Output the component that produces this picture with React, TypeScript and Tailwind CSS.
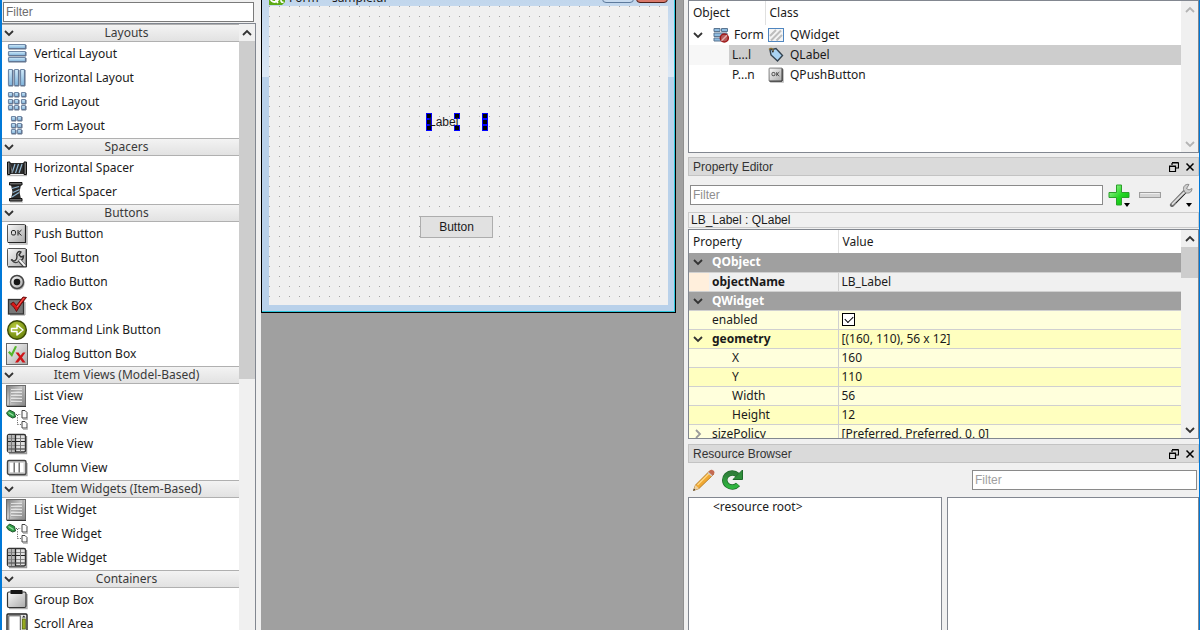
import type { ReactNode } from "react";
import { clsx } from "clsx";

function Chevron({ dir = "down", className = "text-[#333333]" }: { dir?: "down" | "up" | "right"; className?: string }) {
  const paths = { down: "M1 3l4 4 4-4", up: "M1 7l4-4 4 4", right: "M3 1l4 4-4 4" };
  return (
    <svg className={clsx("h-2.5 w-2.5 shrink-0", className)} viewBox="0 0 10 10" fill="none" stroke="currentColor" strokeWidth="1.8">
      <path d={paths[dir]} />
    </svg>
  );
}

/* Shared gradients for the widget icons */
function IconDefs() {
  return (
    <svg className="absolute h-0 w-0" aria-hidden="true">
      <defs>
        <linearGradient id="bar" x1="0" y1="0" x2="0" y2="1">
          <stop offset="0" stopColor="#d3ecfb" />
          <stop offset="1" stopColor="#7fb4dc" />
        </linearGradient>
        <linearGradient id="grey" x1="0" y1="0" x2="1" y2="1">
          <stop offset="0" stopColor="#fafafa" />
          <stop offset="1" stopColor="#a9a9a9" />
        </linearGradient>
        <linearGradient id="list" x1="0" y1="0" x2="1" y2="1">
          <stop offset="0" stopColor="#7d7d7d" />
          <stop offset="0.45" stopColor="#c9c9c9" />
          <stop offset="1" stopColor="#858585" />
        </linearGradient>
        <linearGradient id="plus" x1="0" y1="0" x2="1" y2="1">
          <stop offset="0" stopColor="#b5f7a8" />
          <stop offset="0.55" stopColor="#22d822" />
          <stop offset="1" stopColor="#09b109" />
        </linearGradient>
        <linearGradient id="refresh" x1="0" y1="0" x2="0" y2="1">
          <stop offset="0" stopColor="#2f7d3a" />
          <stop offset="1" stopColor="#2fb63f" />
        </linearGradient>
        <radialGradient id="olive" cx="0.4" cy="0.3" r="0.8">
          <stop offset="0" stopColor="#b4c83a" />
          <stop offset="1" stopColor="#647d06" />
        </radialGradient>
      </defs>
    </svg>
  );
}

function Cells({ xs, ys, w, h }: { xs: number[]; ys: number[]; w: number; h: number }) {
  return (
    <>
      {xs.flatMap((x) =>
        ys.map((y) => (
          <g key={`${x}-${y}`}>
            <rect x={x + 0.5} y={y + 0.5} width={w} height={h} rx="0.8" fill="url(#bar)" stroke="#6f87a6" strokeWidth="1.2" />
            <path d={`M${x + 0.5} ${y + h + 1}h${w + 0.5}V${y + 1}`} fill="none" stroke="#53657f" strokeWidth="0.9" />
          </g>
        ))
      )}
    </>
  );
}

const icons: Record<string, ReactNode> = {
  vbox: <Cells xs={[2]} ys={[1, 8, 14]} w={17} h={4} />,
  hbox: <Cells xs={[2, 8, 14]} ys={[2]} w={4} h={16} />,
  grid: <Cells xs={[2, 8, 15]} ys={[1, 8, 14]} w={4} h={4} />,
  form: <Cells xs={[5, 11]} ys={[1, 8, 14]} w={4} h={4} />,
  hspacer: (
    <>
      <path d="M1 18.5h20" stroke="#b5b5b5" strokeWidth="1.4" />
      <rect x="4" y="6" width="14" height="11" fill="#2b2b2b" />
      <path d="M6 16l3-9M9.5 16l3-9M13 16l3-9" stroke="#8fb6d2" strokeWidth="1.2" />
      <path d="M4 7l2.500 9" stroke="#777777" />
      <path d="M1.500 5h2.500v12.500H1.500zM18 5h2.500v12.500H18z" fill="#777777" stroke="#111111" />
    </>
  ),
  vspacer: (
    <>
      <path d="M4 21h13" stroke="#b5b5b5" />
      <path d="M5 4h10l-1.500 7 1.500 7H5l1.500-7z" fill="#2b2b2b" />
      <path d="M6 7.500l7-2M7 11.500l6.500-3M6 16l7-4.500" stroke="#8fb6d2" strokeWidth="1.200" />
      <path d="M3.500 1.500h12.500V4H3.500zM3.500 17.500h12.500V20H3.500z" fill="#666666" stroke="#111111" />
    </>
  ),
  push: (
    <>
      <path d="M3 21h18V3" fill="none" stroke="#b8b8b8" strokeWidth="1.5" />
      <rect x="1.5" y="1.5" width="18" height="18" rx="1" fill="url(#grey)" stroke="#555555" />
      <path d="M2 19.5h17.5V2" fill="none" stroke="#222222" strokeWidth="1.2" />
      <rect x="5.5" y="7.5" width="4" height="4.5" rx="1.4" fill="none" stroke="#222222" />
      <path d="M12 7v5.5M15.5 7l-3 2.8 3 2.7" fill="none" stroke="#222222" />
    </>
  ),
  tool: (
    <>
      <rect x="1.5" y="1.5" width="18.5" height="18" rx="1" fill="url(#grey)" stroke="#555555" />
      <path d="M5 12.5c3 3 6 1 6-3-1-4 2-6 4-4.500l-2 3 2 2 2.500-1c0 3-2 4.500-4 5" fill="none" stroke="#333333" strokeWidth="1.4" />
      <path d="M6 12c0 3 3 4.500 6 3" fill="none" stroke="#444444" strokeWidth="1.2" />
      <path d="M13 13l5.500 6" stroke="#444444" strokeWidth="3.600" />
      <path d="M13.500 13l5.500 6" stroke="#f3f3f3" strokeWidth="2" />
      <path d="M2 20h18.500V2" fill="none" stroke="#333333" />
    </>
  ),
  radio: (
    <>
      <circle cx="11.5" cy="12" r="7.3" fill="#bbbbbb" />
      <circle cx="11" cy="11" r="6.5" fill="url(#grey)" stroke="#444444" strokeWidth="1.5" />
      <circle cx="11" cy="11" r="3.3" fill="#151515" />
    </>
  ),
  check: (
    <>
      <path d="M4 20h15V7" fill="none" stroke="#999999" />
      <rect x="2.5" y="4.5" width="15" height="14.5" fill="#777777" stroke="#333333" strokeWidth="1.3" />
      <path d="M4.5 9l3-2 3 3.5L17 2l3.5.5C16.5 7 13 12 10.5 16.5 9 13.5 7 11 4.5 9z" fill="#d81818" stroke="#5b0808" strokeWidth="0.9" />
      <path d="M11 12l7-9" stroke="#ff7a70" strokeWidth="0.8" />
    </>
  ),
  command: (
    <>
      <circle cx="11" cy="11" r="9.3" fill="url(#olive)" stroke="#3b4a06" strokeWidth="1.4" />
      <path d="M5.5 9.5H11V6l6 5-6 5v-3.5H5.5z" fill="none" stroke="#ffffff" strokeWidth="1.5" strokeLinejoin="round" />
    </>
  ),
  dialog: (
    <>
      <rect x="0.5" y="0.5" width="21" height="21" fill="url(#grey)" stroke="#666666" />
      <path d="M2 9.5L3.5 8l2 2L9 3l2 .5L6 14z" fill="#55b62b" />
      <path d="M9.5 9.5h3l2 3 2.5-3h2.5l-3.500 5 3.500 5h-3l-2-3-2.500 3H9l4-5.500z" fill="#cf1418" />
    </>
  ),
  list: (
    <>
      <rect x="0.5" y="0.5" width="19" height="20.5" fill="url(#list)" stroke="#6b6b6b" />
      <path d="M1 21.5h19" stroke="#333333" />
      <path d="M3.5 1v20M17 1v20" stroke="#8d8d8d" strokeWidth="0.7" />
      <path d="M5 4.5h11M5 7.5h11M5 10.5h11M5 13.5h11M5 16.5h11" stroke="#e6e6e6" strokeWidth="0.9" />
      <path d="M5 5.5h11M5 8.5h11M5 11.5h11M5 14.5h11M5 17.5h11" stroke="#9b9b9b" strokeWidth="0.6" />
    </>
  ),
  tree: (
    <>
      <path d="M.5 4l3-3 5 2.5 1 4.500-3 1L2 6.500z" fill="#2f9a45" stroke="#164a22" strokeWidth="0.9" />
      <path d="M2.500 3.500l5 3" stroke="#9be3a5" strokeWidth="1.2" />
      <path d="M10 5.500h5M11.500 6v10M11.500 15.500h4" fill="none" stroke="#555555" strokeDasharray="1 1.4" />
      <path d="M16 1.500h3l2 2V9h-5zM16 12.500h3l2 2V19h-5z" fill="#fafafa" stroke="#444444" />
      <path d="M17 10.500h4.500V5M17 20.500h4.500V15" fill="none" stroke="#aaaaaa" strokeWidth="0.8" />
    </>
  ),
  table: (
    <>
      <path d="M3 20.5h17.5V3" fill="none" stroke="#999999" strokeWidth="1.4" />
      <rect x="1.5" y="1.5" width="18" height="17.5" rx="1.5" fill="#e2e2e2" stroke="#333333" strokeWidth="1.4" />
      <path d="M2 2h7.500v17H2z" fill="#b5b5b5" />
      <path d="M2 5.5h17M2 12.5h17M2 16h17" stroke="#8a8a8a" />
      <path d="M2 8.500h17" stroke="#222222" />
      <path d="M5.500 2v17M14.500 2v17" stroke="#777777" />
      <path d="M9.500 2v17" stroke="#222222" strokeWidth="1.300" />
      <path d="M2.500 16h17" stroke="#555555" />
    </>
  ),
  column: (
    <>
      <path d="M3 18.5h18V6" fill="none" stroke="#aaaaaa" strokeWidth="1.3" />
      <rect x="1.5" y="3.5" width="18.5" height="14" rx="1.5" fill="#d4d4d4" stroke="#444444" strokeWidth="1.4" />
      <path d="M4 6h3.500v9H4zM9 6h3.500v9H9zM14 6h3.500v9H14z" fill="#ffffff" />
      <path d="M8.200 5.500v10M13.200 5.500v10" stroke="#555555" strokeWidth="1.100" />
    </>
  ),
  group: (
    <>
      <path d="M3 19.5h18V5" fill="none" stroke="#aaaaaa" strokeWidth="1.4" />
      <rect x="1.5" y="3" width="18.5" height="15.5" rx="1.5" fill="url(#grey)" stroke="#333333" strokeWidth="1.2" />
      <path d="M4.5 1h12v4h-12z" fill="#151515" />
    </>
  ),
  scroll: (
    <>
      <rect x="1" y="1" width="20" height="20" rx="1" fill="#e8e8e8" stroke="#222222" strokeWidth="1.4" />
      <rect x="2.8" y="2.8" width="11.5" height="16" fill="#ffffff" stroke="#555555" />
      <path d="M16 4.5l1.800-2 1.800 2zM16 17.500l1.800 2 1.800-2z" fill="#222222" />
      <rect x="16.3" y="6" width="3" height="10" fill="#9aad22" stroke="#55640c" strokeWidth="0.8" />
    </>
  ),
};

function Icon({ name, className = "h-[22px] w-[22px]" }: { name: string; className?: string }) {
  return (
    <svg className={clsx("shrink-0", className)} viewBox="0 0 22 22" aria-hidden="true">
      {icons[name]}
    </svg>
  );
}

const widgetBox = [
  {
    title: "Layouts",
    items: [["vbox", "Vertical Layout"], ["hbox", "Horizontal Layout"], ["grid", "Grid Layout"], ["form", "Form Layout"]],
  },
  { title: "Spacers", items: [["hspacer", "Horizontal Spacer"], ["vspacer", "Vertical Spacer"]] },
  {
    title: "Buttons",
    items: [
      ["push", "Push Button"],
      ["tool", "Tool Button"],
      ["radio", "Radio Button"],
      ["check", "Check Box"],
      ["command", "Command Link Button"],
      ["dialog", "Dialog Button Box"],
    ],
  },
  {
    title: "Item Views (Model-Based)",
    items: [["list", "List View"], ["tree", "Tree View"], ["table", "Table View"], ["column", "Column View"]],
  },
  { title: "Item Widgets (Item-Based)", items: [["list", "List Widget"], ["tree", "Tree Widget"], ["table", "Table Widget"]] },
  { title: "Containers", items: [["group", "Group Box"], ["scroll", "Scroll Area"]] },
];

function ScrollBar({
  thumb,
  width = "w-[17px]",
  disabled = false,
  downArrow = true,
}: {
  thumb?: string;
  width?: string;
  disabled?: boolean;
  downArrow?: boolean;
}) {
  const tone = disabled ? "text-[#b4b4b4]" : "text-[#333333]";
  return (
    <div className={clsx("flex shrink-0 flex-col bg-[#f0f0f0]", width)}>
      <button aria-label="Scroll up" disabled={disabled} className="flex h-[17px] shrink-0 items-center justify-center">
        <Chevron dir="up" className={tone} />
      </button>
      <div className="min-h-0 flex-1">{thumb && <div className={clsx("bg-[#cdcdcd]", thumb)} />}</div>
      {downArrow && (
        <button aria-label="Scroll down" disabled={disabled} className="flex h-[17px] shrink-0 items-center justify-center">
          <Chevron className={tone} />
        </button>
      )}
    </div>
  );
}

function WidgetBox() {
  return (
    <aside className="flex w-64 shrink-0 flex-col border-l-2 border-[#0078d7]">
      <div className="pt-0.5 pr-0.5 pb-px pl-px">
        <input
          aria-label="Filter widgets"
          placeholder="Filter"
          className="block h-5 w-full border border-[#7a7a7a] bg-white px-0.5 font-['Liberation_Sans',sans-serif] placeholder:text-[#6d6d6d]"
        />
      </div>
      <div className="flex min-h-0 flex-1 border-t border-r border-[#828790] bg-white">
        <div className="min-w-0 flex-1 overflow-hidden">
          {widgetBox.map((group) => (
            <section key={group.title}>
              <button className="flex h-[18px] w-full items-center border-y border-[#b0b0b0] bg-linear-to-b from-[#f3f3f3] to-[#e2e2e2] px-0.5 text-[#3a3a3a]">
                <Chevron />
                <span className="flex-1 pl-0.5 text-center">{group.title}</span>
              </button>
              <ul>
                {group.items.map(([icon, label]) => (
                  <li key={label} className="flex h-6 items-center gap-1.5 pl-1">
                    <Icon name={icon} />
                    {label}
                  </li>
                ))}
              </ul>
            </section>
          ))}
        </div>
        <ScrollBar width="w-4" thumb="h-[338px]" downArrow={false} />
      </div>
    </aside>
  );
}

function Handle({ className }: { className: string }) {
  return <span className={clsx("absolute h-1.5 w-1.5 border border-[#0000ff] bg-black", className)} />;
}

function FormWindow() {
  return (
    <div className="-mt-6 mr-[7px] border border-black">
      <div className="border-r border-b border-[#2cc5dc] bg-linear-to-b from-[#b9d1ea] via-[#dce8f5] via-[100px] to-[#b9d1ea] to-[100px] px-[7px] pr-1.5 pb-1.5">
        <div className="flex h-[29px] items-end gap-1 pb-px">
          <svg className="h-4 w-4" viewBox="0 0 16 16" aria-hidden="true">
            <path d="M3 0h13v13l-3 3H0V3z" fill="#5caa15" />
            <circle cx="5.5" cy="9" r="4" fill="none" stroke="#ffffff" strokeWidth="1.8" />
            <path d="M6.5 11l2.500 3M12 4v7.500c0 1.500 1 2 2.500 1.500M10.500 6.500H14" fill="none" stroke="#ffffff" strokeWidth="1.6" />
          </svg>
          <span className="h-4 flex-1 leading-[18px] whitespace-pre">Form -  sample.ui</span>
          <button aria-label="Maximize" className="mb-0.5 h-5 w-8 rounded-b-sm border border-[#5d7a9c] bg-[#c7daee]" />
          <button aria-label="Close" className="mb-0.5 -ml-0.5 h-5 w-8 rounded-b-sm border border-[#4b1d18] bg-[#d9796b]" />
        </div>
        <div className="relative h-[299px] bg-[#f0f0f0]">
          <svg className="absolute inset-0 h-full w-full" aria-hidden="true">
            <defs>
              <pattern id="dots" width="10" height="10" patternUnits="userSpaceOnUse">
                <rect width="1" height="1" fill="#a4a4a4" />
              </pattern>
            </defs>
            <rect width="100%" height="100%" fill="url(#dots)" />
          </svg>
          <div className="absolute top-[110px] left-[160px] h-3 w-14 font-['Liberation_Sans',sans-serif] leading-3">
            <Handle className="-top-[3px] -left-[3px]" />
            <Handle className="top-[3px] -left-[3px]" />
            <Handle className="-bottom-[3px] -left-[3px]" />
            <Handle className="-top-[3px] left-[25px]" />
            <Handle className="-bottom-[3px] left-[25px]" />
            <Handle className="-top-[3px] -right-[3px]" />
            <Handle className="top-[3px] -right-[3px]" />
            <Handle className="-right-[3px] -bottom-[3px]" />
            <span className="relative">Label</span>
          </div>
          <button className="absolute top-[210px] left-[151px] h-[22px] w-[73px] border border-[#adadad] bg-[#e1e1e1] font-['Liberation_Sans',sans-serif]">
            Button
          </button>
        </div>
      </div>
    </div>
  );
}

function ObjectInspector() {
  return (
    <section className="flex h-[153px] shrink-0 border border-[#828790] bg-white">
      <div className="min-w-0 flex-1">
        <table className="w-full table-fixed text-left">
          <colgroup>
            <col className="w-10" />
            <col className="w-9" />
            <col />
          </colgroup>
          <thead>
            <tr className="h-6">
              <th colSpan={2} className="border-r border-[#e0e0e0] pl-1 font-normal">Object</th>
              <th className="pl-1 font-normal">Class</th>
            </tr>
          </thead>
          <tbody>
            <tr className="h-5">
              <td>
                <div className="flex items-center justify-between pl-1">
                  <Chevron />
                  <svg className="h-4 w-4" viewBox="0 0 16 16" aria-hidden="true">
                    <path d="M1 1.5h6v3H1zM8.5 1.5h6v3h-6zM1 6h13v3.5H1zM1 11h8v3H1z" fill="#8dbbe0" stroke="#5b7590" />
                    <circle cx="11.3" cy="11" r="4" fill="#b55a5a" stroke="#a01919" strokeWidth="1.5" />
                    <path d="M8.5 13.8l5.500-5.500" stroke="#e8b0b0" strokeWidth="1.5" />
                  </svg>
                </div>
              </td>
              <td className="pl-[5px]">Form</td>
              <td className="pl-[3px]">
                <div className="flex items-center gap-1.5">
                  <svg className="h-4 w-4" viewBox="0 0 16 16" aria-hidden="true">
                    <rect x="0.5" y="1.5" width="15" height="13" fill="#f4f4f4" stroke="#4f86c0" />
                    <path d="M2 9l6-6M3 13.500L13 3.500M8.500 13.500L14 8" stroke="#bdbdbd" strokeWidth="2" />
                  </svg>
                  QWidget
                </div>
              </td>
            </tr>
            <tr className="h-5">
              <td className="bg-[#f7f7f7]" />
              <td className="bg-[#cdcdcd] pl-[3px]">L...l</td>
              <td className="bg-[#cdcdcd] pl-[3px]">
                <div className="flex items-center gap-1.5">
                  <svg className="h-4 w-4" viewBox="0 0 16 16" aria-hidden="true">
                    <path d="M2 3l6-1.500 6.500 7-5 5.500L3 8z" fill="#a9d3f3" stroke="#33424f" strokeWidth="1.4" />
                    <path d="M1 2.500c2-2 4-1 4.500 1.500" fill="none" stroke="#8a6d2f" strokeWidth="1.2" />
                    <circle cx="4.8" cy="4.5" r="1" fill="#333333" />
                  </svg>
                  QLabel
                </div>
              </td>
            </tr>
            <tr className="h-5">
              <td />
              <td className="pl-[3px]">P...n</td>
              <td className="pl-[3px]">
                <div className="flex items-center gap-1.5">
                  <Icon name="push" className="h-4 w-4" />
                  QPushButton
                </div>
              </td>
            </tr>
          </tbody>
        </table>
      </div>
      <ScrollBar disabled />
    </section>
  );
}

function DockTitle({ children }: { children: ReactNode }) {
  return (
    <div className="flex h-[19px] shrink-0 items-center border border-[#c3c3c3] bg-[#dadada] pr-[3px] pl-1 font-['Liberation_Sans',sans-serif] text-[#333333]">
      <h2 className="flex-1">{children}</h2>
      <button aria-label="Float" className="mr-1.5">
        <svg className="h-2.5 w-2.5" viewBox="0 0 10 10" fill="none" stroke="#000000">
          <path d="M3 1h6.500v5H7M3 .5h6.500M3 1v2" strokeWidth="1.2" />
          <path d="M.5 4h6v5.500h-6zM.5 4.500h6" strokeWidth="1.2" />
        </svg>
      </button>
      <button aria-label="Close">
        <svg className="h-2.5 w-2.5" viewBox="0 0 10 10" stroke="#000000" strokeWidth="1.5">
          <path d="M1.500 1.500l7 7M8.500 1.500l-7 7" />
        </svg>
      </button>
    </div>
  );
}

const properties = [
  { name: "enabled", value: "", tone: "bg-[#ffffdc]" },
  { name: "geometry", value: "[(160, 110), 56 x 12]", tone: "bg-[#ffffbf]", bold: true, arrow: "down" as const },
  { name: "X", value: "160", tone: "bg-[#ffffdc]", child: true },
  { name: "Y", value: "110", tone: "bg-[#ffffbf]", child: true },
  { name: "Width", value: "56", tone: "bg-[#ffffdc]", child: true },
  { name: "Height", value: "12", tone: "bg-[#ffffbf]", child: true },
  { name: "sizePolicy", value: "[Preferred, Preferred, 0, 0]", tone: "bg-[#ffffdc]", arrow: "right" as const },
];

function GroupRow({ name }: { name: string }) {
  return (
    <tr className="h-[19px] border-b border-[#d0d0d0] bg-[#a0a0a0] text-white">
      <th colSpan={2} className="p-0 font-bold">
        <div className="flex items-center gap-[9px] pl-1">
          <Chevron />
          {name}
        </div>
      </th>
    </tr>
  );
}

function DropArrow() {
  return (
    <svg className="absolute right-1 bottom-0 h-1 w-1.5" viewBox="0 0 6 4" aria-hidden="true">
      <path d="M0 0h6L3 4z" fill="#000000" />
    </svg>
  );
}

function PropertyEditor() {
  return (
    <section className="mt-1 shrink-0">
      <DockTitle>Property Editor</DockTitle>
      <div className="flex items-center pt-[7px] pr-[3px] pb-[3px] pl-0.5">
        <input
          aria-label="Filter properties"
          placeholder="Filter"
          className="h-5 min-w-0 flex-1 border border-[#8a8a8a] bg-white px-0.5 font-['Liberation_Sans',sans-serif] placeholder:text-[#8e8e8e]"
        />
        <button aria-label="Add dynamic property" className="relative flex h-6 w-[31px] items-center justify-center">
          <svg className="h-[22px] w-[22px]" viewBox="0 0 22 22">
            <path d="M8.5 1h5v7.500H21v5h-7.500V21h-5v-7.500H1v-5h7.500z" fill="url(#plus)" stroke="#2aa02a" />
          </svg>
          <DropArrow />
        </button>
        <button aria-label="Remove dynamic property" className="flex h-6 w-[31px] items-center justify-center">
          <svg className="h-[22px] w-[22px]" viewBox="0 0 22 22">
            <rect x="0.5" y="8.5" width="21" height="5" fill="#d5d5d5" stroke="#9d9d9d" />
            <path d="M1.500 9.500h19" stroke="#efefef" />
          </svg>
        </button>
        <button aria-label="Configure" className="relative flex h-6 w-[31px] items-center justify-center">
          <svg className="h-6 w-6" viewBox="0 0 24 24" fill="none">
            <path d="M3 22L16 8.500" stroke="#6f6f6f" strokeWidth="4.2" strokeLinecap="round" />
            <path d="M3.500 21L15 9.500" stroke="#dcdcdc" strokeWidth="1.8" strokeLinecap="round" />
            <path d="M20 1.500c-3-.8-6 1.500-5.500 5l1.500 3c3.500 1.500 7 0 7-4l-3 1.500-2.500-1.500z" fill="#cfcfcf" stroke="#8a8a8a" />
            <path d="M7 20L16.500 10.500" stroke="#333333" />
          </svg>
          <DropArrow />
        </button>
      </div>
      <div className="mt-0.5 h-4 border border-[#cbcbcb] px-0.5 font-['Liberation_Sans',sans-serif] leading-[14px]">LB_Label : QLabel</div>
      <div className="mt-px flex h-[210px] border border-[#828790] bg-white">
        <div className="min-w-0 flex-1 overflow-hidden">
          <table className="w-full table-fixed border-collapse text-left">
            <colgroup>
              <col className="w-[149px]" />
              <col />
            </colgroup>
            <thead>
              <tr className="h-[23px]">
                <th className="border-r border-[#e0e0e0] px-1 font-normal">Property</th>
                <th className="px-1 font-normal">Value</th>
              </tr>
            </thead>
            <tbody>
              <GroupRow name="QObject" />
              <tr className="h-[19px] border-b border-[#d0d0d0] bg-[#f0f0f0]">
                <th className="border-r border-[#d0d0d0] p-0">
                  <div className="flex h-[18px] items-center">
                    <span className="mr-[3px] h-full w-5 bg-[#ffefdc]" />
                    objectName
                  </div>
                </th>
                <td className="px-[3px] py-0">LB_Label</td>
              </tr>
              <GroupRow name="QWidget" />
              {properties.map((prop) => (
                <tr key={prop.name} className={clsx("h-[19px] border-b border-[#d0d0d0]", prop.tone)}>
                  <th className={clsx("border-r border-[#d0d0d0] p-0", prop.bold ? "font-bold" : "font-normal")}>
                    <div className={clsx("flex items-center", prop.child ? "pl-[43px]" : prop.arrow ? "gap-[9px] pl-1" : "pl-[23px]")}>
                      {prop.arrow && <Chevron dir={prop.arrow} className={prop.arrow === "right" ? "text-[#9a9a9a]" : "text-[#333333]"} />}
                      {prop.name}
                    </div>
                  </th>
                  <td className="px-[3px] py-0">
                    {prop.name === "enabled" ? (
                      <input
                        type="checkbox"
                        aria-label="enabled"
                        defaultChecked
                        className="block h-[13px] w-[13px] appearance-none border border-black bg-white checked:before:block checked:before:h-[5px] checked:before:w-2 checked:before:translate-x-[2px] checked:before:translate-y-[2px] checked:before:-rotate-45 checked:before:border-b checked:before:border-l checked:before:border-black"
                      />
                    ) : (
                      prop.value
                    )}
                  </td>
                </tr>
              ))}
            </tbody>
          </table>
        </div>
        <ScrollBar thumb="h-[31px]" />
      </div>
    </section>
  );
}

function ResourceBrowser() {
  return (
    <section className="mt-[5px] flex min-h-0 flex-1 flex-col">
      <DockTitle>Resource Browser</DockTitle>
      <div className="flex h-[34px] shrink-0 items-center gap-1.5 pr-0.5 pl-1">
        <button aria-label="Edit resources">
          <svg className="h-6 w-6" viewBox="0 0 24 24">
            <path d="M1.500 22.500l2-5.500L18 2.500l4 3.500L7 20.500z" fill="#f0a832" stroke="#a9701c" strokeWidth="0.8" />
            <path d="M5.500 17L18.500 4" stroke="#ffd680" strokeWidth="1.5" />
            <path d="M18 2.500c1.500-2 6 1 4 3.500l-2 2-4-3.500z" fill="#c46a52" />
            <path d="M16 4.500l4 3.500" stroke="#cfcfcf" strokeWidth="1.5" />
            <path d="M3.500 17L7 20.500l-5.500 2z" fill="#edd1a0" />
            <path d="M1.200 22.800l.8-2.200 1.400 1.400z" fill="#333333" />
          </svg>
        </button>
        <button aria-label="Reload">
          <svg className="h-[22px] w-[22px]" viewBox="0 0 22 22">
            <path d="M16 15.500A7.500 7 0 1 1 15.500 6" fill="none" stroke="#1e6b2a" strokeWidth="5.5" />
            <path d="M16 15.500A7.500 7 0 1 1 15.500 6" fill="none" stroke="url(#refresh)" strokeWidth="4" />
            <path d="M20.500 1v9.500h-9.500z" fill="#2f8f3b" stroke="#1e6b2a" />
          </svg>
        </button>
        <input
          aria-label="Filter resources"
          placeholder="Filter"
          className="ml-auto h-5 w-[225px] border border-[#8a8a8a] bg-white px-0.5 font-['Liberation_Sans',sans-serif] placeholder:text-[#a0a0a0]"
        />
      </div>
      <div className="flex min-h-0 flex-1 gap-[5px]">
        <div className="w-[254px] shrink-0 border-x border-t border-[#828790] bg-white pt-px pl-6">&lt;resource root&gt;</div>
        <div className="flex-1 border-x border-t border-[#828790] bg-white" />
      </div>
    </section>
  );
}

export default function App() {
  return (
    <div className="flex h-screen overflow-hidden bg-[#f0f0f0] font-['Noto_Sans','Noto_Sans_CJK_KR',sans-serif] text-[12px] leading-4 text-[#1a1a1a]">
      <IconDefs />
      <WidgetBox />
      <main className="ml-[5px] min-w-0 flex-1 overflow-hidden border-r border-[#8f8f8f] bg-[#a0a0a0]">
        <FormWindow />
      </main>
      <div className="flex w-[43%] shrink-0 flex-col border-r border-[#0078d7] pl-1">
        <ObjectInspector />
        <PropertyEditor />
        <ResourceBrowser />
      </div>
    </div>
  );
}
